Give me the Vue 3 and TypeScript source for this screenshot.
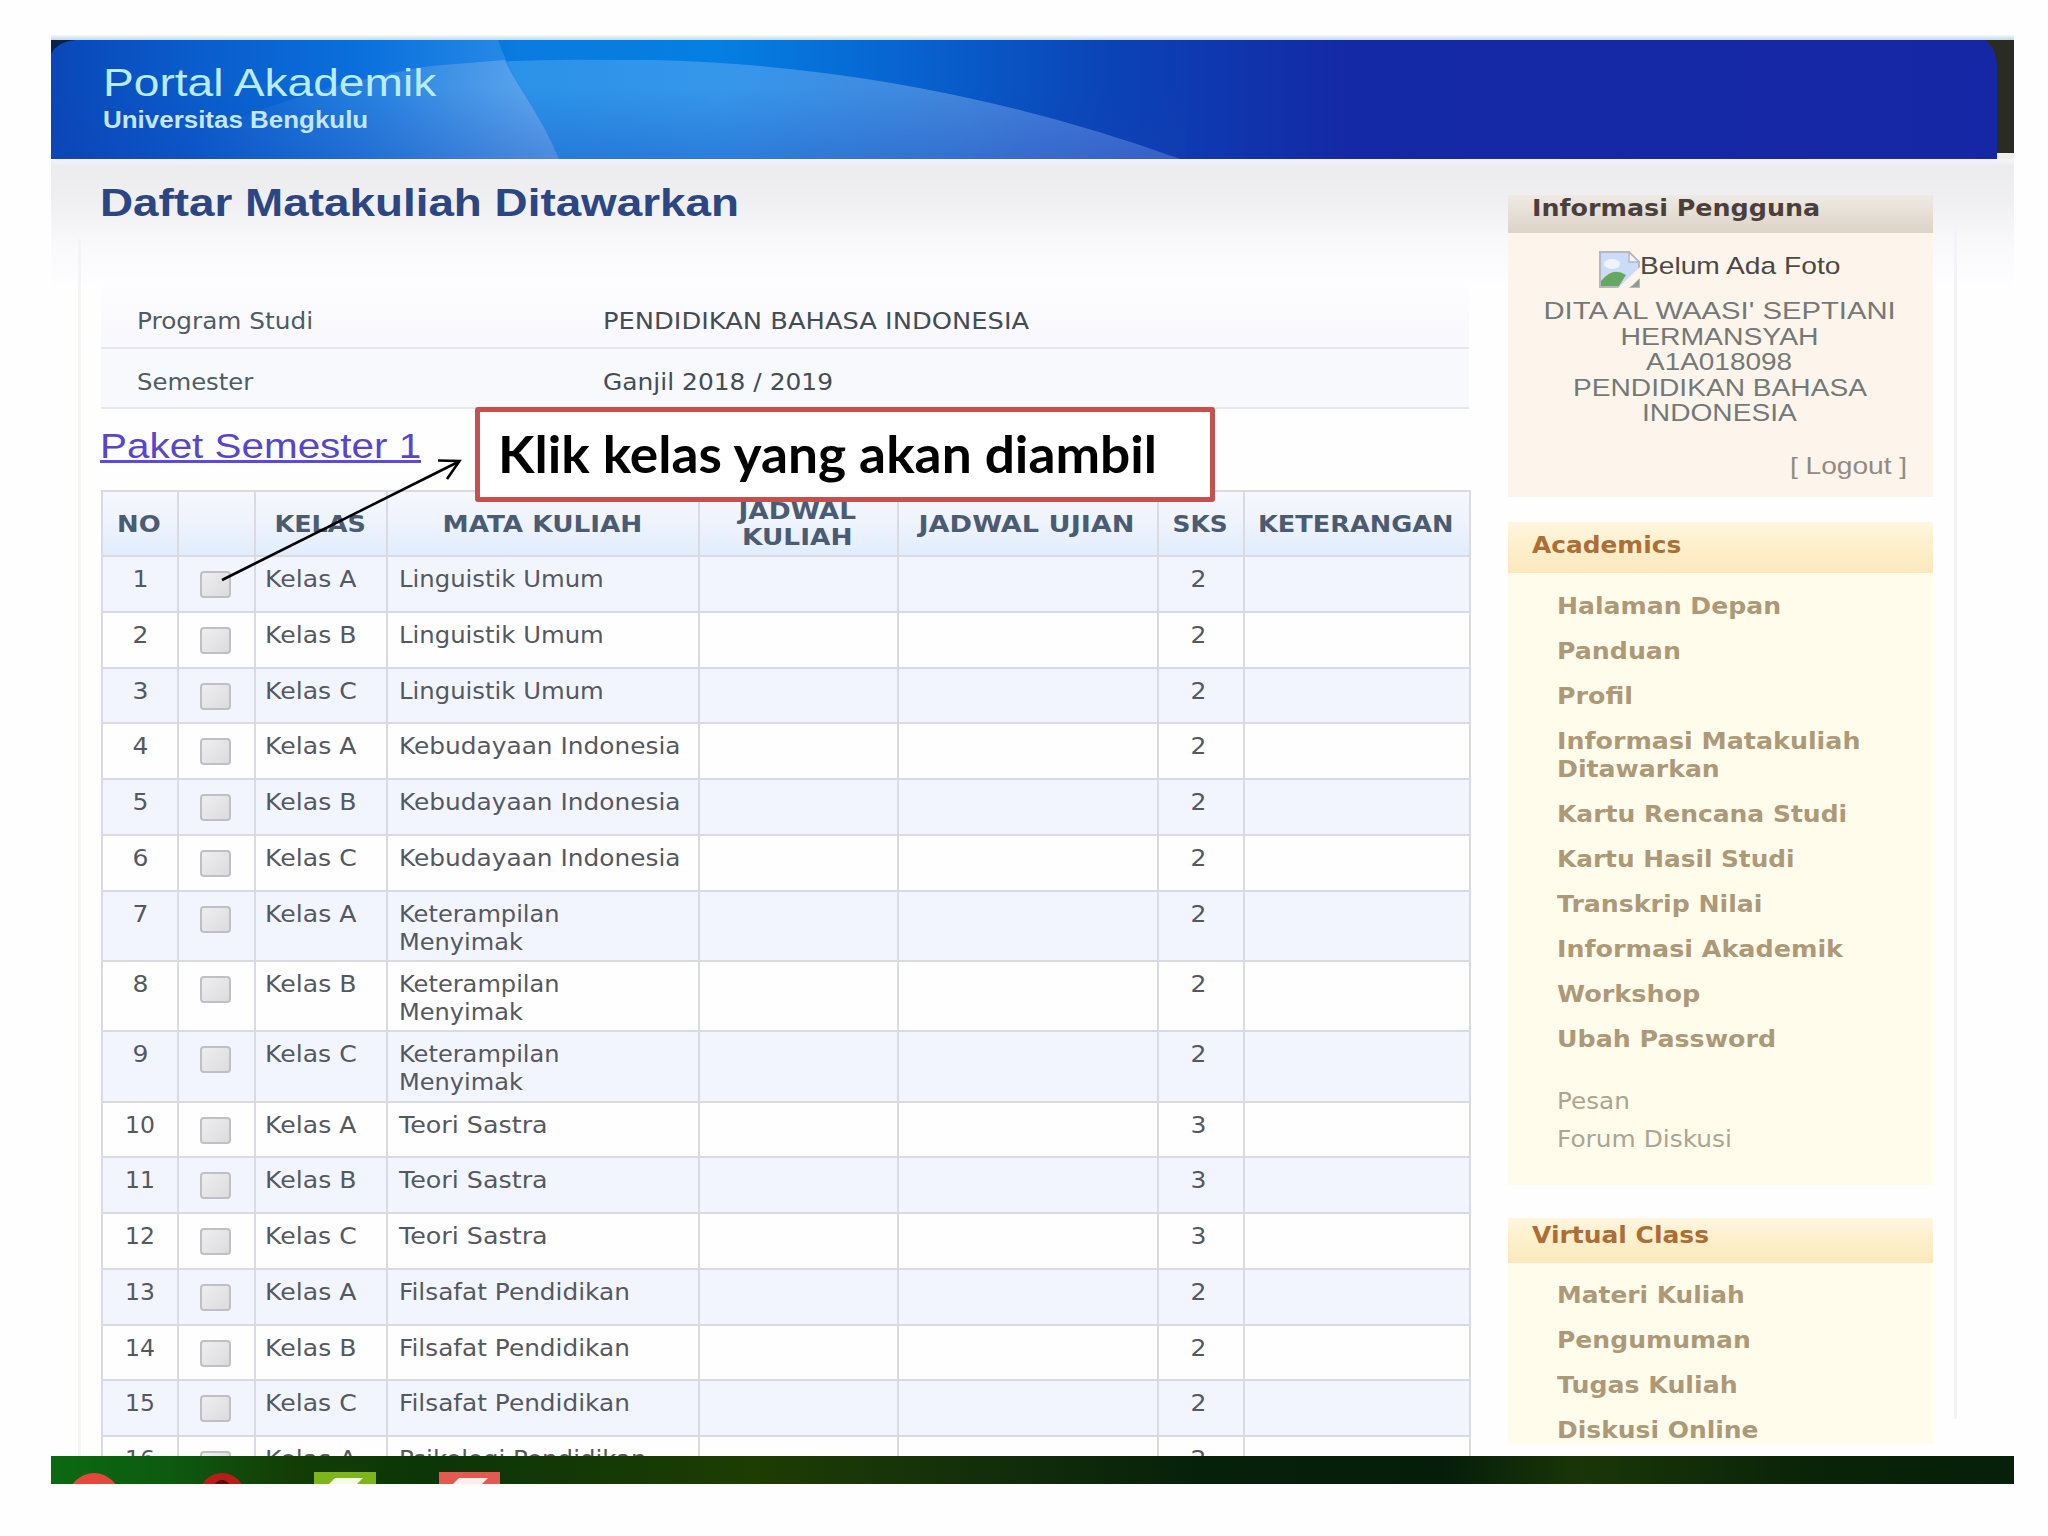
<script setup lang="ts">
interface Line { text: string; w: number }
interface Course { kelas: string; lines: Line[]; sks: number }

// Stretches a text run horizontally to the given width in pixels.
const vFit = {
  mounted(el: HTMLElement, binding: { value: number }) {
    const natural = el.offsetWidth
    if (natural > 0 && binding.value) el.style.transform = `scaleX(${binding.value / natural})`
  },
}

const kelasWidth: Record<string, number> = { A: 91, B: 91, C: 92 }

const subjects: { lines: Line[]; sks: number }[] = [
  { lines: [{ text: 'Linguistik Umum', w: 205 }], sks: 2 },
  { lines: [{ text: 'Kebudayaan Indonesia', w: 282 }], sks: 2 },
  { lines: [{ text: 'Keterampilan', w: 161 }, { text: 'Menyimak', w: 124 }], sks: 2 },
  { lines: [{ text: 'Teori Sastra', w: 149 }], sks: 3 },
  { lines: [{ text: 'Filsafat Pendidikan', w: 231 }], sks: 2 },
  { lines: [{ text: 'Psikologi Pendidikan', w: 248 }], sks: 2 },
]

const rows: Course[] = subjects
  .flatMap((s) => ['A', 'B', 'C'].map((kelas) => ({ kelas, ...s })))
  .slice(0, 16)

const heads: Line[][] = [
  [{ text: 'NO', w: 44 }],
  [],
  [{ text: 'KELAS', w: 91 }],
  [{ text: 'MATA KULIAH', w: 200 }],
  [{ text: 'JADWAL', w: 117 }, { text: 'KULIAH', w: 110 }],
  [{ text: 'JADWAL UJIAN', w: 216 }],
  [{ text: 'SKS', w: 55 }],
  [{ text: 'KETERANGAN', w: 195 }],
]

const user: Line[] = [
  { text: "DITA AL WAASI' SEPTIANI", w: 352 },
  { text: 'HERMANSYAH', w: 198 },
  { text: 'A1A018098', w: 146 },
  { text: 'PENDIDIKAN BAHASA', w: 294 },
  { text: 'INDONESIA', w: 155 },
]

const academics: Line[][] = [
  [{ text: 'Halaman Depan', w: 224 }],
  [{ text: 'Panduan', w: 124 }],
  [{ text: 'Profil', w: 76 }],
  [{ text: 'Informasi Matakuliah', w: 303 }, { text: 'Ditawarkan', w: 163 }],
  [{ text: 'Kartu Rencana Studi', w: 290 }],
  [{ text: 'Kartu Hasil Studi', w: 238 }],
  [{ text: 'Transkrip Nilai', w: 206 }],
  [{ text: 'Informasi Akademik', w: 286 }],
  [{ text: 'Workshop', w: 143 }],
  [{ text: 'Ubah Password', w: 219 }],
]
const extras: Line[] = [{ text: 'Pesan', w: 73 }, { text: 'Forum Diskusi', w: 175 }]
const virtual: Line[] = [
  { text: 'Materi Kuliah', w: 188 },
  { text: 'Pengumuman', w: 194 },
  { text: 'Tugas Kuliah', w: 181 },
  { text: 'Diskusi Online', w: 202 },
]
</script>

<template>
  <div class="page">
    <div class="slide">
      <div class="strip"></div>
      <header class="banner">
        <svg class="banner-art" viewBox="0 0 1963 119" preserveAspectRatio="none">
          <defs>
            <linearGradient id="base" x1="0" x2="1963" y1="0" y2="0" gradientUnits="userSpaceOnUse">
              <stop offset="0" stop-color="#0b46b4" />
              <stop offset=".24" stop-color="#0a7be0" />
              <stop offset=".34" stop-color="#047fe2" />
              <stop offset=".44" stop-color="#0862cf" />
              <stop offset=".54" stop-color="#0b43b6" />
              <stop offset=".66" stop-color="#1429a6" />
              <stop offset="1" stop-color="#1627a6" />
            </linearGradient>
            <linearGradient id="dome" x1="370" x2="1130" y1="0" y2="0" gradientUnits="userSpaceOnUse">
              <stop offset="0" stop-color="#2590e8" />
              <stop offset=".4" stop-color="#3697ea" />
              <stop offset=".7" stop-color="#4286dc" />
              <stop offset="1" stop-color="#456dd0" />
            </linearGradient>
            <linearGradient id="left" x1="0" x2="480" y1="0" y2="0" gradientUnits="userSpaceOnUse">
              <stop offset="0" stop-color="#0a47b8" />
              <stop offset=".3" stop-color="#0a5ccc" />
              <stop offset=".65" stop-color="#0a70dc" />
              <stop offset="1" stop-color="#2a8de8" />
            </linearGradient>
            <linearGradient id="wedge" x1="150" x2="500" y1="40" y2="90" gradientUnits="userSpaceOnUse">
              <stop offset="0" stop-color="#3a86dc" stop-opacity="0" />
              <stop offset=".6" stop-color="#4a97e6" stop-opacity=".6" />
              <stop offset="1" stop-color="#62a8ee" />
            </linearGradient>
            <linearGradient id="low" x1="0" x2="0" y1="0" y2="1">
              <stop offset=".4" stop-color="#1440b4" stop-opacity="0" />
              <stop offset="1" stop-color="#1440b4" stop-opacity=".3" />
            </linearGradient>
          </defs>
          <rect width="1963" height="119" fill="url(#base)" />
          <path d="M370 30Q440 18 560 20L600 20Q870 26 1129 119H300Z" fill="url(#dome)" />
          <path d="M0 0H447C458 35 488 70 508 119H0Z" fill="url(#left)" />
          <path d="M100 119Q230 50 380 26L454 20C466 47 490 75 508 119Z" fill="url(#wedge)" />
          <rect width="1135" height="119" fill="url(#low)" />
          <path d="M0 0H24Q6 2 0 14Z" fill="#0a2348" />
          <path d="M1934 0H1963V113H1946V30Q1946 8 1934 0Z" fill="#2a2c24" />
          <path d="M1946 113H1963V119H1946Z" fill="#eeeef2" />
        </svg>
        <div class="brand">
          <div class="brand-name"><span v-fit="333" class="fit">Portal Akademik</span></div>
          <div class="brand-sub"><span v-fit="265" class="fit">Universitas Bengkulu</span></div>
        </div>
      </header>

      <main class="main">
        <section class="content">
          <h1><span v-fit="639" class="fit">Daftar Matakuliah Ditawarkan</span></h1>
          <div class="info">
            <div class="info-row">
              <span class="info-key"><span v-fit="176" class="fit">Program Studi</span></span>
              <span v-fit="426" class="fit">PENDIDIKAN BAHASA INDONESIA</span>
            </div>
            <div class="info-row">
              <span class="info-key"><span v-fit="116" class="fit">Semester</span></span>
              <span v-fit="230" class="fit">Ganjil 2018 / 2019</span>
            </div>
          </div>
          <h2><span v-fit="321" class="fit link">Paket Semester 1</span></h2>

          <div class="grid">
            <div class="row head">
              <div v-for="(h, i) in heads" :key="i" class="cell">
                <div v-for="l in h" :key="l.text"><span v-fit="l.w" class="fit mid">{{ l.text }}</span></div>
              </div>
            </div>
            <div v-for="(r, i) in rows" :key="i" class="row" :class="{ odd: i % 2 === 0, tall: r.lines.length > 1 }">
              <div class="cell center"><span v-fit="i < 9 ? 16 : 30" class="fit mid">{{ i + 1 }}</span></div>
              <div class="cell check"><i class="box"></i></div>
              <div class="cell left"><span v-fit="kelasWidth[r.kelas]" class="fit">Kelas {{ r.kelas }}</span></div>
              <div class="cell left name">
                <div v-for="l in r.lines" :key="l.text"><span v-fit="l.w" class="fit">{{ l.text }}</span></div>
              </div>
              <div class="cell"></div>
              <div class="cell"></div>
              <div class="cell center sks"><span v-fit="16" class="fit mid">{{ r.sks }}</span></div>
              <div class="cell"></div>
            </div>
          </div>
        </section>

        <aside class="side">
          <div class="side-head grey"><span v-fit="288" class="fit">Informasi Pengguna</span></div>
          <div class="user">
            <div class="photo">
              <svg width="41" height="37" viewBox="0 0 41 37">
                <path d="M1 1H30L40 11V36H1Z" fill="#cddcf6" stroke="#b4b8c4" stroke-width="2" />
                <path d="M30 1V11H40Z" fill="#f4f4f8" stroke="#b4b8c4" stroke-width="1.5" />
                <ellipse cx="13" cy="13" rx="8" ry="5" fill="#eef3fd" />
                <path d="M2 35V30Q14 15 27 24L20 35Z" fill="#66a862" />
                <path d="M19 37L41 16V27L30 37Z" fill="#fdf5ec" />
                <path d="M32 36L40 28V36Z" fill="#8d9c8c" />
              </svg>
              <span v-fit="200" class="fit">Belum Ada Foto</span>
            </div>
            <div v-for="l in user" :key="l.text" class="user-line"><span v-fit="l.w" class="fit mid">{{ l.text }}</span></div>
            <div class="logout"><span v-fit="117" class="fit end">[ Logout ]</span></div>
          </div>

          <div class="side-head gold first"><span v-fit="149" class="fit">Academics</span></div>
          <div class="menu academics">
            <div v-for="(item, i) in academics" :key="i" class="item">
              <div v-for="l in item" :key="l.text"><span v-fit="l.w" class="fit">{{ l.text }}</span></div>
            </div>
            <div class="extras">
              <div v-for="l in extras" :key="l.text" class="extra"><span v-fit="l.w" class="fit">{{ l.text }}</span></div>
            </div>
          </div>

          <div class="side-head gold second"><span v-fit="177" class="fit">Virtual Class</span></div>
          <div class="menu">
            <div v-for="l in virtual" :key="l.text" class="item"><span v-fit="l.w" class="fit">{{ l.text }}</span></div>
          </div>
        </aside>
      </main>

      <footer class="taskbar">
        <svg width="600" height="28" viewBox="0 0 600 28">
          <circle cx="43" cy="43" r="26" fill="#e2483c" />
          <circle cx="171" cy="40" r="23" fill="#b81d1a" />
          <ellipse cx="171" cy="40" rx="11" ry="16" fill="#5a0d08" />
          <rect x="263" y="16" width="62" height="14" fill="#7fb51c" />
          <path d="M278 28L284 22H312L306 28Z" fill="#f4fbe6" />
          <rect x="388" y="16" width="61" height="14" fill="#e25a50" />
          <path d="M402 28L408 22H437L431 28Z" fill="#fdeeee" />
        </svg>
      </footer>
    </div>

    <div class="callout"><span v-fit="659" class="fit">Klik kelas yang akan diambil</span></div>
    <svg class="arrow" width="260" height="140" viewBox="210 450 260 140">
      <path d="M222 580L459 461.5M438 460.5L459.5 461L447 479" fill="none" stroke="#000" stroke-width="2.6" />
    </svg>
  </div>
</template>

<style>
body { margin: 0; background: #fefefe; }
</style>

<style scoped>
.page {
  position: relative;
  box-sizing: border-box;
  width: 2048px;
  height: 1536px;
  padding: 35px 34px 52px 51px;
  overflow: hidden;
  background: #fefefe;
  font-family: "DejaVu Sans", Verdana, sans-serif;
}
.fit { display: inline-block; white-space: nowrap; transform-origin: 0 50%; }
.mid { transform-origin: 50% 50%; }
.end { transform-origin: 100% 50%; }

.slide { display: flex; flex-direction: column; width: 1963px; height: 1449px; overflow: hidden; }
.strip { flex: none; height: 5px; background: linear-gradient(#f7f9fc, #c3d9e8); }
.banner { flex: none; display: grid; height: 119px; }
.banner-art { grid-area: 1 / 1; width: 1963px; height: 119px; }
.brand {
  grid-area: 1 / 1;
  z-index: 1;
  padding: 20px 0 0 52px;
  font-family: "Liberation Sans", Arial, sans-serif;
}
.brand-name { height: 46px; line-height: 46px; font-size: 38.5px; color: #b9ecff; }
.brand-sub { height: 28px; line-height: 28px; font-size: 23px; font-weight: 700; color: #c4e6ff; }

.main {
  flex: none;
  display: flex;
  gap: 37px;
  height: 1297px;
  padding-left: 50px;
  overflow: hidden;
  background:
    linear-gradient(#f3f3f8, #f3f3f8) 27px 80px / 3px 1300px no-repeat,
    linear-gradient(#f5f3fa, #f5f3fa) 1903px 60px / 3px 1200px no-repeat,
    linear-gradient(#f4f4fb 0, #ececef 8px, #f0f0f3 45px, #f9f9fc 85px, #fefeff 130px, #fefeff 100%);
}
.content { flex: none; width: 1370px; }
h1 {
  height: 46px;
  margin: 21px 0 0 -1px;
  font: 700 39px/46px "Liberation Sans", Arial, sans-serif;
  color: #2b4683;
}
.info { width: 1368px; margin-top: 60px; color: #444c55; font-size: 23.5px; }
.info-row {
  display: flex;
  align-items: center;
  box-sizing: border-box;
  height: 60px;
  padding: 7px 0 0 36px;
  border-bottom: 2px solid #e7e8ef;
  background: #f8f9fd;
}
.info-row:first-child { height: 63px; padding-top: 8px; background: linear-gradient(#fdfcfe, #f8f8fd); }
.info-key { width: 466px; color: #4f5c64; }
h2 { height: 42px; margin: 16px 0 0 -1px; font: 400 35.5px/42px "Liberation Sans", Arial, sans-serif; }
.link {
  height: 35px;
  line-height: 43px;
  border-bottom: 3px solid #5b4ae0;
  color: #5746cc;
}

.grid {
  box-sizing: border-box;
  width: 1370px;
  margin-top: 23px;
  border-top: 2px solid #d9dae2;
  border-right: 2px solid #d9dae2;
}
.row {
  display: grid;
  grid-template-columns: 76px 76.5px 132.5px 312px 199px 260px 86px 1fr;
  box-sizing: border-box;
  height: 55.75px;
  border-bottom: 2px solid #d9dae2;
  background: #fefefe;
  color: #56585f;
  font-size: 23.5px;
  line-height: 28px;
}
.row.odd { background: #f2f5fe; }
.row.tall { height: 70.4px; }
.row.head {
  height: 65px;
  background: linear-gradient(#f6f7fd, #eef3fd 50%, #e1edfc);
  font-size: 23.5px;
  font-weight: 700;
  color: #4a5b72;
}
.cell { box-sizing: border-box; padding-top: 8px; border-left: 2px solid #d9dae2; }
.head .cell { display: flex; flex-direction: column; align-items: center; justify-content: center; }
.row.head .cell { padding: 1px 2px 0 0; }
.head .cell > div { height: 26px; line-height: 26px; }
.center { text-align: center; }
.sks { padding-right: 5px; }
.left { padding-left: 9.5px; }
.name { padding-left: 11px; }
.check { padding: 14px 0 0 21px; }
.box {
  display: block;
  box-sizing: border-box;
  width: 31px;
  height: 27px;
  border: 2px solid #bfbfc5;
  border-radius: 4px;
  background: linear-gradient(135deg, #eeeeef, #dcdcdf);
}

.side { flex: none; width: 425px; }
.side-head {
  box-sizing: border-box;
  padding-left: 24px;
  font-size: 23px;
  font-weight: 700;
}
.grey {
  height: 38px;
  margin-top: 36px;
  line-height: 26px;
  background: linear-gradient(#eeeae4, #e4dcd2 60%, #ddd4c8);
  color: #4b3f3c;
}
.user {
  box-sizing: border-box;
  height: 264px;
  padding: 18px 26px 0 24px;
  background: #fdf5ec;
  font: 24.5px/25.5px "Liberation Sans", Arial, sans-serif;
  text-align: center;
  color: #747978;
}
.photo { display: flex; height: 47px; padding-left: 67px; color: #4a4a45; line-height: 29px; }
.user-line { height: 25.5px; }
.logout { margin-top: 27px; text-align: right; color: #928a80; }
.gold { background: linear-gradient(#fef6df, #fdf0cc 45%, #fbe9bd); color: #ad6d36; }
.first { height: 51px; margin-top: 25px; line-height: 47px; }
.second { height: 45px; margin-top: 33px; line-height: 34px; }
.menu {
  padding: 18px 0 0 49px;
  background: #fffcec;
  color: #ad9978;
  font-size: 23px;
  font-weight: 700;
  line-height: 28px;
}
.academics { box-sizing: border-box; height: 612px; padding-top: 19px; }
.item { margin-bottom: 17px; }
.extras { margin-top: 34px; color: #ada492; font-weight: 400; }
.extra { height: 38px; }

.taskbar { flex: none; height: 28px; background: linear-gradient(90deg, #0b6a12 0, #0d5a10 120px, #133d05 240px, #0c3508 380px, #1d3d02 700px, #17330a 860px, #06210a 1150px, #051d0a 1390px, #1a3608 1530px, #0a2408 1750px, #06200a 100%); }
.taskbar svg { display: block; }

.callout {
  position: absolute;
  left: 475px;
  top: 407px;
  box-sizing: border-box;
  width: 740px;
  height: 95px;
  padding-left: 18px;
  border: 5px solid #c5504e;
  border-radius: 3px;
  background: #fff;
  color: #000;
  font: 700 51px/84px Lato, sans-serif;
}
.arrow { position: absolute; left: 210px; top: 450px; }
</style>
